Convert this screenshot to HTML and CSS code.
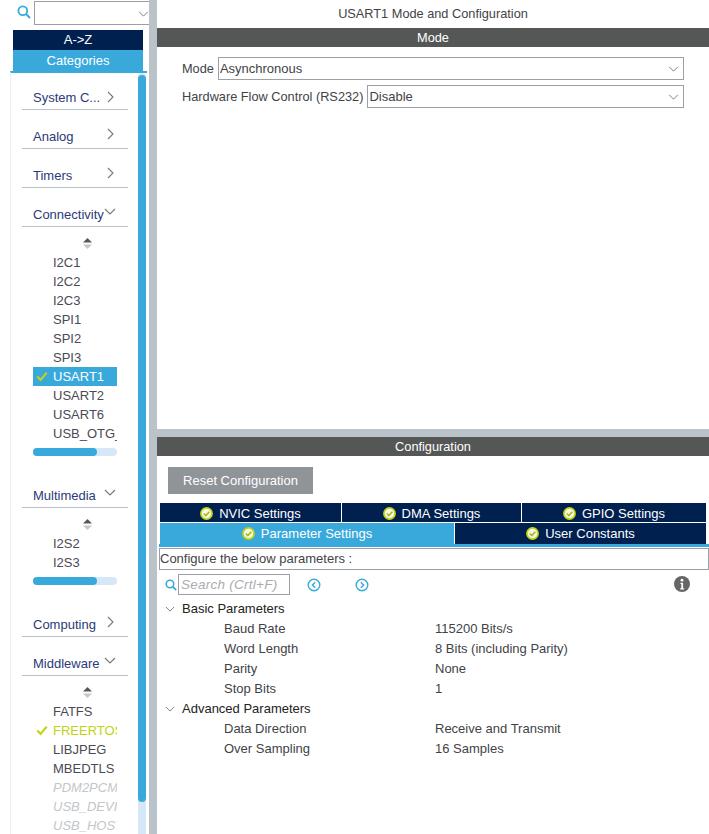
FILE: index.html
```html
<!DOCTYPE html>
<html lang="en">

<head>
    <meta charset="UTF-8">
    <meta name="viewport" content="width=device-width, initial-scale=1.0">
    <title>USART1 Mode and Configuration</title>
    <link rel="stylesheet" href="styles.css">
</head>

<body>
    <svg class="icon-defs" width="0" height="0">
        <symbol id="chev-down" viewBox="0 0 12 7"><path d="M1 1l5 5 5-5" fill="none" stroke="currentColor" stroke-width="1.1"/></symbol>
        <symbol id="chev-right" viewBox="0 0 7 12"><path d="M1 1l5 5-5 5" fill="none" stroke="currentColor" stroke-width="1.1"/></symbol>
        <symbol id="lens" viewBox="0 0 14 14"><circle cx="5.8" cy="5.8" r="4.4" fill="none" stroke="currentColor" stroke-width="1.8"/><path d="M9 9l4 4" stroke="currentColor" stroke-width="2"/></symbol>
        <symbol id="tick" viewBox="0 0 14 12"><path d="M1.5 6l3.8 4L12.5 1.5" fill="none" stroke="currentColor" stroke-width="2.6"/></symbol>
        <symbol id="tab-ok" viewBox="0 0 13 13"><circle cx="6.5" cy="6.5" r="5.6" fill="#f6f8e6" stroke="#c3d313" stroke-width="1.7"/><path d="M3.8 6.5l2 2 3.6-3.8" fill="none" stroke="#a9b81a" stroke-width="1.6"/></symbol>
        <symbol id="sort" viewBox="0 0 9 11"><path d="M4.5 0L9 4.6H0z" fill="#55585a"/><path d="M0 6.4h9L4.5 11z" fill="#c4c8cb"/></symbol>
    </svg>

    <div class="app">
        <aside class="sidebar">
            <div class="search-row">
                <svg class="search-icon"><use href="#lens"/></svg>
                <div class="combo"><svg class="combo-chev"><use href="#chev-down"/></svg></div>
            </div>
            <div class="sort-btn az">A-&gt;Z</div>
            <div class="sort-btn cats">Categories</div>

            <div class="side-body">
                <div class="cat-list">
                    <div class="cat">System C...<svg class="chev-r"><use href="#chev-right"/></svg></div>
                    <div class="cat">Analog<svg class="chev-r"><use href="#chev-right"/></svg></div>
                    <div class="cat">Timers<svg class="chev-r"><use href="#chev-right"/></svg></div>
                    <div class="cat">Connectivity<svg class="chev-d"><use href="#chev-down"/></svg></div>
                    <div class="group group-conn">
                        <svg class="sort"><use href="#sort"/></svg>
                        <div class="item">I2C1</div>
                        <div class="item">I2C2</div>
                        <div class="item">I2C3</div>
                        <div class="item">SPI1</div>
                        <div class="item">SPI2</div>
                        <div class="item">SPI3</div>
                        <div class="item selected"><svg class="tick"><use href="#tick"/></svg>USART1</div>
                        <div class="item">USART2</div>
                        <div class="item">USART6</div>
                        <div class="item">USB_OTG_FS</div>
                        <div class="hscroll"><div class="hthumb"></div></div>
                    </div>
                    <div class="cat">Multimedia<svg class="chev-d"><use href="#chev-down"/></svg></div>
                    <div class="group group-media">
                        <svg class="sort"><use href="#sort"/></svg>
                        <div class="item">I2S2</div>
                        <div class="item">I2S3</div>
                        <div class="hscroll"><div class="hthumb"></div></div>
                    </div>
                    <div class="cat">Computing<svg class="chev-r"><use href="#chev-right"/></svg></div>
                    <div class="cat">Middleware<svg class="chev-d"><use href="#chev-down"/></svg></div>
                    <div class="group">
                        <svg class="sort"><use href="#sort"/></svg>
                        <div class="item">FATFS</div>
                        <div class="item active"><svg class="tick"><use href="#tick"/></svg>FREERTOS</div>
                        <div class="item">LIBJPEG</div>
                        <div class="item">MBEDTLS</div>
                        <div class="item disabled">PDM2PCM</div>
                        <div class="item disabled">USB_DEVICE</div>
                        <div class="item disabled">USB_HOST</div>
                    </div>
                </div>
                <div class="vscroll"><div class="vthumb"></div></div>
            </div>
        </aside>

        <main class="main">
            <div class="mode-pane">
                <div class="page-title">USART1 Mode and Configuration</div>
                <div class="bar">Mode</div>
                <div class="mode-form">
                    <div class="form-row">
                        <span>Mode</span>
                        <div class="select">Asynchronous<svg class="select-chev"><use href="#chev-down"/></svg></div>
                    </div>
                    <div class="form-row">
                        <span>Hardware Flow Control (RS232)</span>
                        <div class="select">Disable<svg class="select-chev"><use href="#chev-down"/></svg></div>
                    </div>
                </div>
            </div>

            <div class="config-pane">
                <div class="bar">Configuration</div>
                <button class="reset-btn">Reset Configuration</button>

                <div class="tabs tabs-top">
                    <div class="tab"><svg class="tab-ok"><use href="#tab-ok"/></svg>NVIC Settings</div>
                    <div class="tab"><svg class="tab-ok"><use href="#tab-ok"/></svg>DMA Settings</div>
                    <div class="tab"><svg class="tab-ok"><use href="#tab-ok"/></svg>GPIO Settings</div>
                </div>
                <div class="tabs tabs-bottom">
                    <div class="tab current"><svg class="tab-ok"><use href="#tab-ok"/></svg>Parameter Settings</div>
                    <div class="tab"><svg class="tab-ok"><use href="#tab-ok"/></svg>User Constants</div>
                </div>
                <div class="tab-line"></div>

                <div class="hint-box">Configure the below parameters :</div>

                <div class="tool-row">
                    <svg class="param-lens"><use href="#lens"/></svg>
                    <div class="param-search">Search (Crtl+F)</div>
                    <svg class="nav-btn" viewBox="0 0 14 14"><circle cx="7" cy="7" r="5.8" fill="none" stroke="currentColor" stroke-width="1.4"/><path d="M8.2 4.2L5.4 7l2.8 2.8" fill="none" stroke="currentColor" stroke-width="1.4"/></svg>
                    <svg class="nav-btn" viewBox="0 0 14 14"><circle cx="7" cy="7" r="5.8" fill="none" stroke="currentColor" stroke-width="1.4"/><path d="M5.8 4.2L8.6 7l-2.8 2.8" fill="none" stroke="currentColor" stroke-width="1.4"/></svg>
                    <svg class="info" viewBox="0 0 16 16"><circle cx="8" cy="8" r="8" fill="#666"/><circle cx="8" cy="4.2" r="1.4" fill="#fff"/><path d="M6.4 6.8h2.7v5.4h1v1.3H6.2v-1.3h1.1V8.1h-.9z" fill="#fff"/></svg>
                </div>

                <div class="tree">
                    <div class="tree-head"><svg class="tree-chev"><use href="#chev-down"/></svg>Basic Parameters</div>
                    <div class="tree-row"><span>Baud Rate</span><span>115200 Bits/s</span></div>
                    <div class="tree-row"><span>Word Length</span><span>8 Bits (including Parity)</span></div>
                    <div class="tree-row"><span>Parity</span><span>None</span></div>
                    <div class="tree-row"><span>Stop Bits</span><span>1</span></div>
                    <div class="tree-head"><svg class="tree-chev"><use href="#chev-down"/></svg>Advanced Parameters</div>
                    <div class="tree-row"><span>Data Direction</span><span>Receive and Transmit</span></div>
                    <div class="tree-row"><span>Over Sampling</span><span>16 Samples</span></div>
                </div>
            </div>
        </main>
    </div>
</body>

</html>
```

FILE: styles.css
```css
* {
    box-sizing: border-box;
}

body {
    margin: 0;
    height: 834px;
    overflow: hidden;
    background: white;
    font-family: "Liberation Sans", Arial, sans-serif;
    font-size: 13px;
    color: #3f4347;
}

.icon-defs {
    display: block;
    height: 0;
}

.app {
    display: flex;
    height: 834px;
}

/* left panel */
.sidebar {
    width: 157px;
    flex: none;
    padding-right: 8px;
    border-right: 8px solid #b9c3c9;
    overflow: hidden;
}

.search-row {
    display: flex;
    height: 30px;
    padding: 1px 0 0 17px;
    gap: 3px;
}

.search-icon {
    width: 14px;
    height: 14px;
    margin-top: 4px;
    flex: none;
    color: #39a9dc;
}

.combo {
    width: 118px;
    height: 24px;
    flex: none;
    position: relative;
    border: 1px solid #9aa0a5;
    background: white;
}

.combo-chev {
    position: absolute;
    right: 2px;
    top: 9px;
    width: 11px;
    height: 6px;
    color: #777;
}

.sort-btn {
    width: 130px;
    margin-left: 13px;
    color: white;
    text-align: center;
}

.az {
    height: 20px;
    line-height: 19px;
    background: #00204f;
}

.cats {
    height: 21px;
    line-height: 21px;
    background: #39a9dc;
}

.side-body {
    display: flex;
    height: 763px;
    margin-left: 10px;
    width: 137px;
    border-top: 2px solid #39a9dc;
    border-left: 1px solid #eeeeee;
}

.cat-list {
    width: 127px;
    flex: none;
}

.cat {
    position: relative;
    height: 39px;
    margin-left: 11px;
    width: 106px;
    padding: 19px 0 0 11px;
    line-height: 15px;
    color: #2b3a77;
    border-bottom: 1px solid #b9c3c9;
    white-space: nowrap;
}

.cat:first-child {
    height: 37px;
    padding-top: 17px;
}

.chev-r {
    position: absolute;
    right: 14px;
    top: 18px;
    width: 7px;
    height: 12px;
    color: #777;
}

.chev-d {
    position: absolute;
    right: 12px;
    top: 20px;
    width: 12px;
    height: 7px;
    color: #777;
}

.group {
    padding: 11px 0 0 22px;
    width: 106px;
    height: 158px;
}

.group-conn {
    height: 242px;
}

.group-media {
    height: 90px;
}

.sort {
    display: block;
    width: 9px;
    height: 11px;
    margin: 0 0 3.5px 50px;
}

.item {
    position: relative;
    width: 84px;
    height: 19px;
    padding-left: 20px;
    line-height: 19px;
    overflow: hidden;
    white-space: nowrap;
    color: #4a4a55;
}

.item.selected {
    background: #39a9dc;
    color: white;
}

.item.active {
    color: #c3d313;
}

.item.disabled {
    color: #c2c6ca;
    font-style: italic;
}

.tick {
    position: absolute;
    left: 3px;
    top: 4px;
    width: 12px;
    height: 11px;
    color: #c3d313;
}

.hscroll {
    width: 84px;
    height: 8px;
    margin-top: 5.5px;
    border-radius: 4px;
    background: #d6e8f7;
}

.group-media .hscroll {
    margin-top: 5px;
}

.hthumb {
    width: 64px;
    height: 8px;
    border-radius: 4px;
    background: #39a9dc;
}

.vscroll {
    width: 8px;
    margin-left: 0;
    background: #d6e8f7;
    border-radius: 4px 4px 0 0;
    height: 763px;
}

.vthumb {
    height: 727px;
    margin-top: 2px;
    border-radius: 4px;
    background: #39a9dc;
}

/* right panel */
.main {
    flex: 1;
    min-width: 0;
}

.mode-pane {
    height: 429px;
}

.page-title {
    height: 28px;
    line-height: 27px;
    font-size: 12.75px;
    text-align: center;
}

.bar {
    height: 19px;
    line-height: 19px;
    font-size: 12.75px;
    text-align: center;
    color: white;
    background: #555756;
}

.mode-form {
    padding: 10px 25px 0;
}

.form-row {
    display: flex;
    align-items: center;
    gap: 4px;
    height: 23px;
    margin-bottom: 5px;
    font-size: 12.75px;
}

.select {
    position: relative;
    flex: 1;
    height: 23px;
    padding-left: 1px;
    line-height: 21px;
    font-size: 13px;
    border: 1px solid #9aa0a5;
}

.select-chev {
    position: absolute;
    right: 4px;
    top: 8px;
    width: 11px;
    height: 6px;
    color: #777;
}

.config-pane {
    border-top: 8px solid #b9c3c9;
    height: 405px;
}

.reset-btn {
    display: block;
    width: 145px;
    height: 27px;
    margin: 11px 0 9px 11px;
    padding: 0;
    border: none;
    background: #8f9499;
    color: white;
    font-family: inherit;
    font-size: 13px;
}

.tabs {
    display: grid;
    width: 546px;
    margin-left: 3px;
    column-gap: 1px;
}

.tabs-top {
    grid-template-columns: 181px 179px 184px;
    height: 19px;
    margin-bottom: 1px;
}

.tabs-bottom {
    grid-template-columns: 294px 251px;
    height: 21px;
}

.tab {
    display: flex;
    align-items: center;
    justify-content: center;
    gap: 6px;
    background: #00204f;
    color: white;
}

.tabs-top .tab {
    padding-top: 1px;
}

.tab.current {
    background: #39a9dc;
}

.tab-ok {
    width: 13px;
    height: 13px;
    flex: none;
}

.tab-line {
    height: 3px;
    margin-left: 2px;
    background: #39a9dc;
}

.hint-box {
    height: 22px;
    margin: 1px 0 0 2px;
    line-height: 20px;
    border: 1px solid #9aa0a5;
}

.tool-row {
    position: relative;
    display: flex;
    align-items: center;
    height: 21px;
    margin-top: 4px;
    padding-left: 8px;
}

.param-lens {
    width: 12px;
    height: 12px;
    flex: none;
    color: #39a9dc;
}

.param-search {
    width: 112px;
    height: 21px;
    margin-left: 1px;
    padding-left: 2px;
    line-height: 19px;
    font-size: 13.5px;
    letter-spacing: 0.25px;
    border: 1px solid #9aa0a5;
    color: #a9adb1;
    font-style: italic;
}

.nav-btn {
    width: 14px;
    height: 14px;
    margin-left: 17px;
    color: #39a9dc;
}

.nav-btn + .nav-btn {
    margin-left: 34px;
}

.info {
    position: absolute;
    right: 19px;
    top: 2px;
    width: 16px;
    height: 16px;
}

.tree {
    margin-top: 4px;
}

.tree-head,
.tree-row {
    display: flex;
    height: 20px;
    line-height: 20px;
    white-space: nowrap;
}

.tree-head {
    align-items: center;
    padding-left: 8px;
    color: #222;
}

.tree-chev {
    width: 10px;
    height: 6px;
    margin-right: 7px;
    color: #777;
}

.tree-row {
    padding-left: 67px;
}

.tree-row span:first-child {
    width: 211px;
}
```
